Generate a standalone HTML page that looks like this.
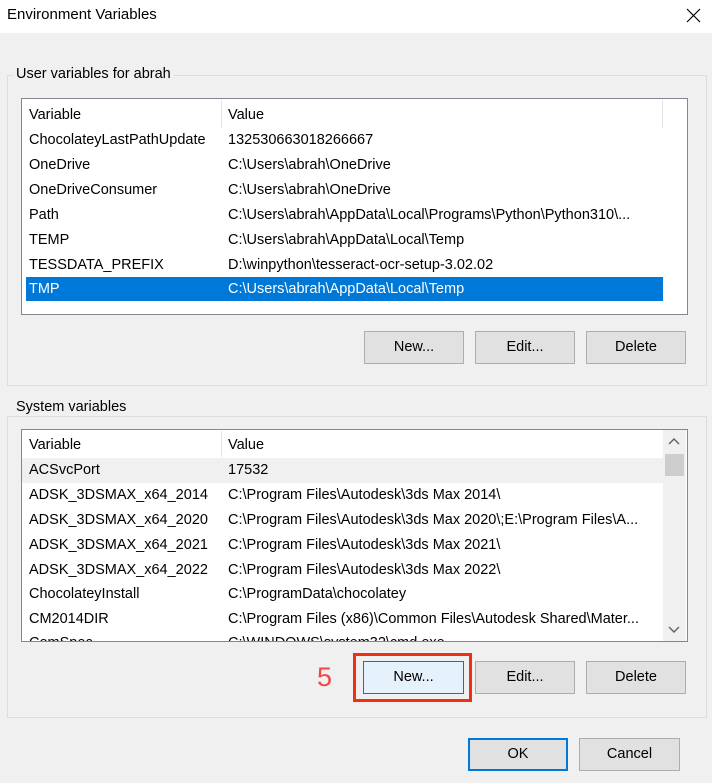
<!DOCTYPE html>
<html><head><style>
body{margin:0;width:712px;height:783px;background:#f0f0f0;font-family:"Liberation Sans",sans-serif;font-size:14.5px;color:#000;position:relative;overflow:hidden}
.a{position:absolute}
.title{left:0;top:0;width:712px;height:33px;background:#fff}
.grp{border:1px solid #dcdcdc}
.leg{background:#f0f0f0;padding:0 3px}
.list{background:#fff;border:1px solid #828790}
.row{position:absolute;left:4px;height:24px;line-height:24px;white-space:nowrap}
.row span{position:absolute}
.btn{background:#e1e1e1;border:1px solid #adadad;text-align:center;line-height:30px;box-sizing:border-box;height:33px}
.sel{background:#0078d7;color:#fff}
</style></head><body>
<div class="a title"></div>
<div class="a" style="left:7px;top:6px;font-size:15px">Environment Variables</div>
<svg class="a" style="left:686px;top:8px" width="15" height="15"><path d="M1 1L14 14M14 1L1 14" stroke="#000" stroke-width="1.2"/></svg>

<div class="a grp" style="left:7px;top:75px;width:698px;height:309px"></div>
<div class="a leg" style="left:13px;top:66px">User variables for abrah</div>
<div class="a list" style="left:21px;top:98px;width:665px;height:215px">
 <div class="a" style="left:199px;top:1px;width:1px;height:28px;background:#e5e5e5"></div>
 <div class="a" style="left:640px;top:1px;width:1px;height:28px;background:#e5e5e5"></div>
 <div class="row" style="top:4px"><span style="left:3px">Variable</span><span style="left:202px">Value</span></div>
 <div class="row" style="top:29px"><span style="left:3px">ChocolateyLastPathUpdate</span><span style="left:202px">132530663018266667</span></div>
 <div class="row" style="top:54px"><span style="left:3px">OneDrive</span><span style="left:202px">C:\Users\abrah\OneDrive</span></div>
 <div class="row" style="top:79px"><span style="left:3px">OneDriveConsumer</span><span style="left:202px">C:\Users\abrah\OneDrive</span></div>
 <div class="row" style="top:104px"><span style="left:3px">Path</span><span style="left:202px">C:\Users\abrah\AppData\Local\Programs\Python\Python310\...</span></div>
 <div class="row" style="top:129px"><span style="left:3px">TEMP</span><span style="left:202px">C:\Users\abrah\AppData\Local\Temp</span></div>
 <div class="row" style="top:154px"><span style="left:3px">TESSDATA_PREFIX</span><span style="left:202px">D:\winpython\tesseract-ocr-setup-3.02.02</span></div>
 <div class="row sel" style="top:178px;width:637px"><span style="left:3px">TMP</span><span style="left:202px">C:\Users\abrah\AppData\Local\Temp</span></div>
</div>
<div class="a btn" style="left:364px;top:331px;width:100px">New...</div>
<div class="a btn" style="left:475px;top:331px;width:100px">Edit...</div>
<div class="a btn" style="left:586px;top:331px;width:100px">Delete</div>

<div class="a grp" style="left:7px;top:416px;width:698px;height:300px"></div>
<div class="a leg" style="left:13px;top:399px">System variables</div>
<div class="a list" style="left:21px;top:429px;width:665px;height:211px;overflow:hidden">
 <div class="a" style="left:199px;top:1px;width:1px;height:26px;background:#e5e5e5"></div>
 <div class="a" style="left:0;top:28px;width:641px;height:25px;background:#f0f0f0"></div>
 <div class="row" style="top:3px"><span style="left:3px">Variable</span><span style="left:202px">Value</span></div>
 <div class="row" style="top:28px"><span style="left:3px">ACSvcPort</span><span style="left:202px">17532</span></div>
 <div class="row" style="top:53px"><span style="left:3px">ADSK_3DSMAX_x64_2014</span><span style="left:202px">C:\Program Files\Autodesk\3ds Max 2014\</span></div>
 <div class="row" style="top:78px"><span style="left:3px">ADSK_3DSMAX_x64_2020</span><span style="left:202px">C:\Program Files\Autodesk\3ds Max 2020\;E:\Program Files\A...</span></div>
 <div class="row" style="top:103px"><span style="left:3px">ADSK_3DSMAX_x64_2021</span><span style="left:202px">C:\Program Files\Autodesk\3ds Max 2021\</span></div>
 <div class="row" style="top:128px"><span style="left:3px">ADSK_3DSMAX_x64_2022</span><span style="left:202px">C:\Program Files\Autodesk\3ds Max 2022\</span></div>
 <div class="row" style="top:152px"><span style="left:3px">ChocolateyInstall</span><span style="left:202px">C:\ProgramData\chocolatey</span></div>
 <div class="row" style="top:177px"><span style="left:3px">CM2014DIR</span><span style="left:202px">C:\Program Files (x86)\Common Files\Autodesk Shared\Mater...</span></div>
 <div class="row" style="top:201px"><span style="left:3px">ComSpec</span><span style="left:202px">C:\WINDOWS\system32\cmd.exe</span></div>
 <div class="a" style="left:641px;top:0;width:23px;height:211px;background:#f0f0f0"></div>
 <div class="a" style="left:643px;top:24px;width:19px;height:22px;background:#cdcdcd"></div>
 <svg class="a" style="left:646px;top:8px" width="12" height="8"><path d="M1 6L6 1L11 6" stroke="#606060" fill="none" stroke-width="1.4"/></svg>
 <svg class="a" style="left:646px;top:195px" width="12" height="8"><path d="M1 2L6 7L11 2" stroke="#606060" fill="none" stroke-width="1.4"/></svg>
</div>
<div class="a" style="left:317px;top:662px;font-size:27px;color:#f0484a">5</div>
<div class="a" style="left:353px;top:653px;width:113px;height:43px;border:3px solid #f03010"></div>
<div class="a btn" style="left:363px;top:661px;width:101px;background:#e5f1fb;border-color:#0078d7">New...</div>
<div class="a btn" style="left:475px;top:661px;width:100px">Edit...</div>
<div class="a btn" style="left:586px;top:661px;width:100px">Delete</div>

<div class="a btn" style="left:468px;top:738px;width:100px;border:2px solid #0078d7;line-height:29px">OK</div>
<div class="a btn" style="left:579px;top:738px;width:101px">Cancel</div>
</body></html>
